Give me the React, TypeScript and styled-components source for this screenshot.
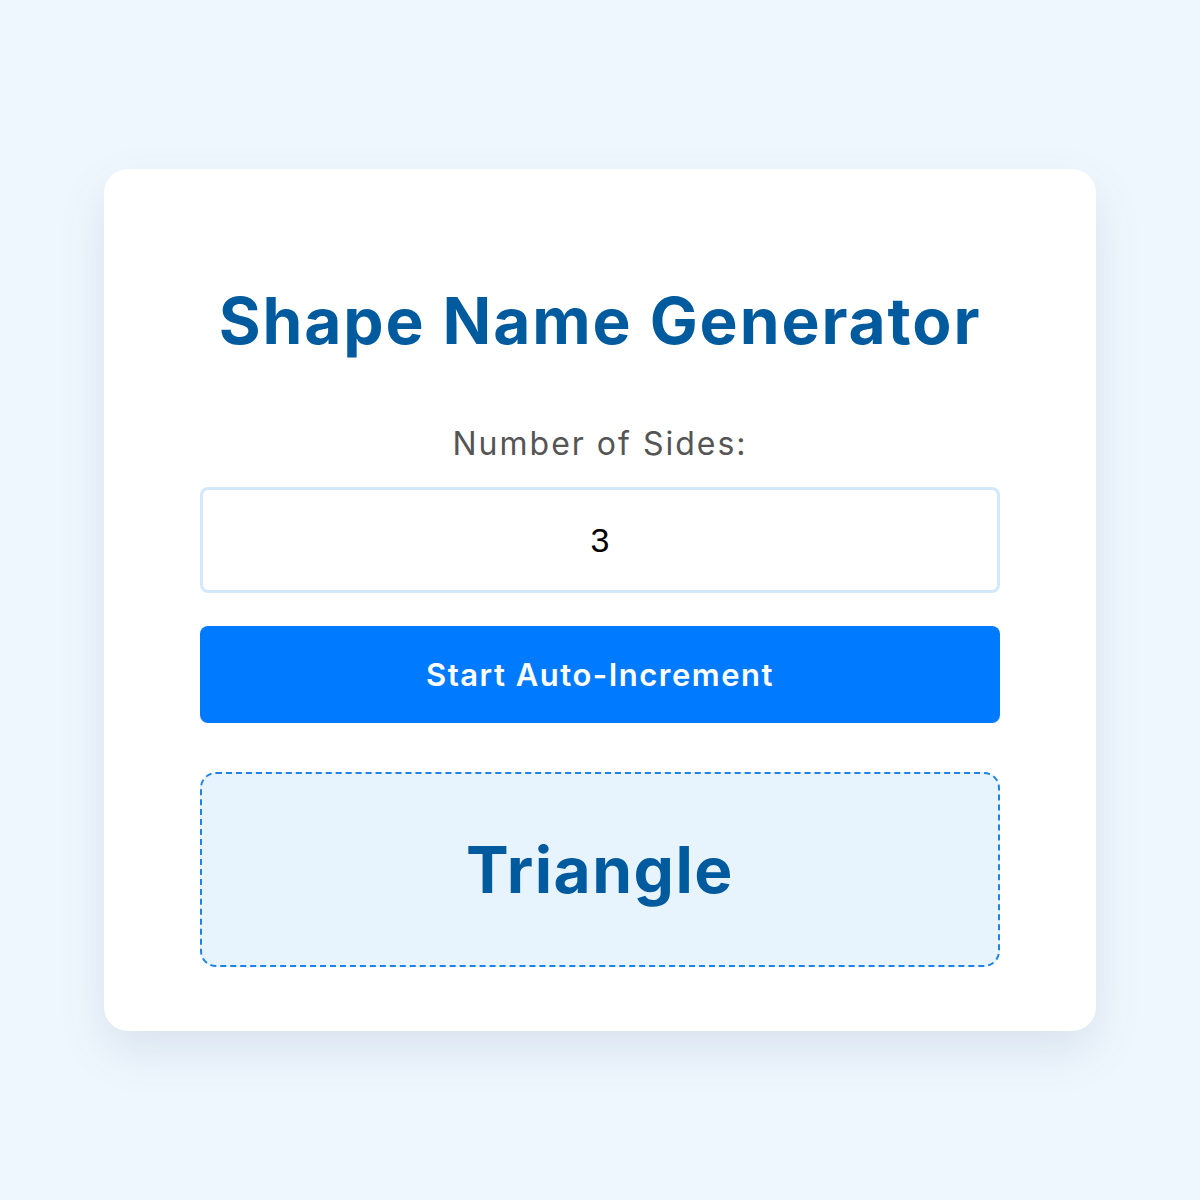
import React, { useState } from "react";
import styled, { createGlobalStyle } from "styled-components";

const GlobalStyle = createGlobalStyle`
  * {
    box-sizing: border-box;
  }
  body {
    margin: 0;
    background: #eff7fe;
    font-family: Inter, "Open Sans", sans-serif;
  }
`;

const Page = styled.div`
  min-height: 100vh;
  display: flex;
  align-items: center;
  justify-content: center;
`;

const Card = styled.div`
  width: 992px;
  background: #ffffff;
  border-radius: 24px;
  padding: 114px 96px 64px;
  box-shadow: 0 20px 50px rgba(30, 60, 100, 0.1);
  display: flex;
  flex-flow: column;
  align-items: stretch;
`;

const Title = styled.h1`
  margin: 0;
  font-size: 64px;
  line-height: 1.2;
  font-weight: 700;
  color: #005a9e;
  text-align: center;
  letter-spacing: 1.9px;
`;

const Label = styled.label`
  margin-top: 65px;
  font-size: 32px;
  line-height: 1.2;
  font-weight: 400;
  color: #555555;
  text-align: center;
  letter-spacing: 2px;
`;

const SidesInput = styled.input`
  margin-top: 24px;
  height: 106px;
  border: 3px solid #d3e8fd;
  border-radius: 8px;
  font-family: "Liberation Sans", Arial, sans-serif;
  font-size: 34px;
  color: #000;
  text-align: center;
  outline: none;
  background: #fff;
`;

const Button = styled.button`
  margin-top: 33px;
  height: 97px;
  border: none;
  border-radius: 8px;
  background: #007bff;
  color: #ffffff;
  font-family: Inter, "Open Sans", sans-serif;
  font-size: 31px;
  font-weight: 600;
  letter-spacing: 1.5px;
  cursor: pointer;
`;

const Result = styled.div`
  margin-top: 49px;
  height: 195px;
  border: 2px dashed #1f82e6;
  border-radius: 16px;
  background: #e8f4fd;
  display: flex;
  align-items: center;
  justify-content: center;
  font-size: 64px;
  font-weight: 700;
  letter-spacing: 1.5px;
  color: #005a9e;
`;

const names: Record<number, string> = {
  3: "Triangle",
  4: "Quadrilateral",
  5: "Pentagon",
  6: "Hexagon",
  7: "Heptagon",
  8: "Octagon",
  9: "Nonagon",
  10: "Decagon",
};

const App: React.FC = () => {
  const [sides, setSides] = useState<number>(3);

  return (
    <>
      <GlobalStyle />
      <Page>
        <Card>
          <Title>Shape Name Generator</Title>
          <Label htmlFor="sides">Number of Sides:</Label>
          <SidesInput
            id="sides"
            type="text"
            value={sides}
            onChange={(e) => setSides(Number(e.target.value) || 0)}
          />
          <Button>Start Auto-Increment</Button>
          <Result>{names[sides] || `${sides}-gon`}</Result>
        </Card>
      </Page>
    </>
  );
};

export default App;
